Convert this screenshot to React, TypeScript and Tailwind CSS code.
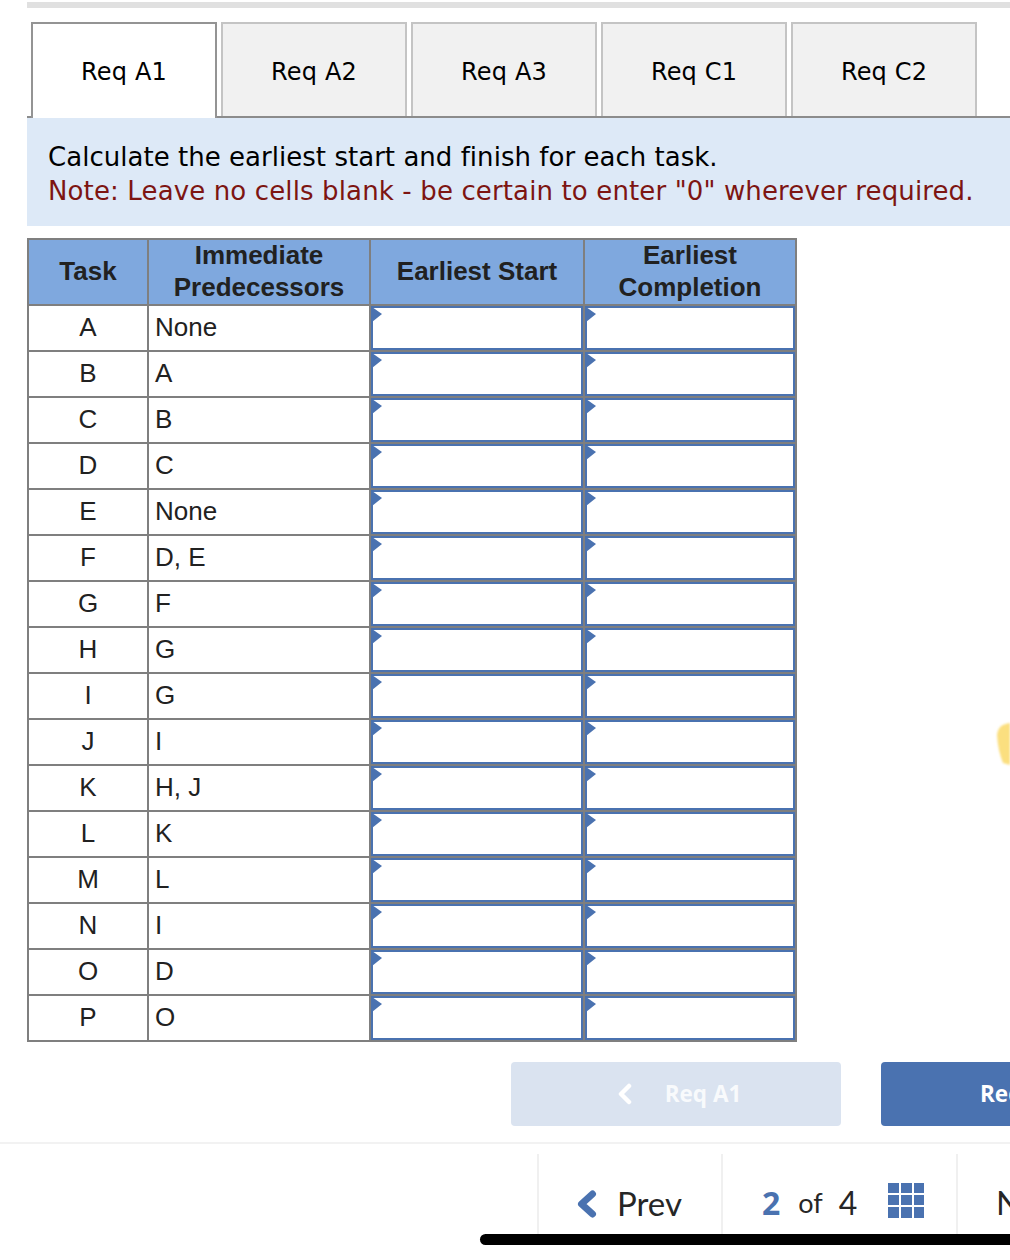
const tabs = ["Req A1", "Req A2", "Req A3", "Req C1", "Req C2"];
const rows = [
  ["A", "None"], ["B", "A"], ["C", "B"], ["D", "C"], ["E", "None"], ["F", "D, E"], ["G", "F"], ["H", "G"],
  ["I", "G"], ["J", "I"], ["K", "H, J"], ["L", "K"], ["M", "L"], ["N", "I"], ["O", "D"], ["P", "O"],
];

function EntryCell() {
  return (
    <td className="relative border-2 border-[#7f7f7f] p-0 align-top">
      <input aria-label="entry" className="block h-[44px] w-full border-2 border-[#4a72b0] bg-white outline-none" />
      <svg className="absolute left-0 top-0 h-[16px] w-[11px]" viewBox="0 0 11 16">
        <polygon points="1,1 11,8 1,16" fill="#4a72b0" />
      </svg>
    </td>
  );
}

function HeaderCell({ lines }: { lines: string[] }) {
  return (
    <th className="border-2 border-[#7f7f7f] font-bold">
      <div className="-translate-y-px">
        {lines.map((l) => (
          <div key={l}>{l}</div>
        ))}
      </div>
    </th>
  );
}

export default function App() {
  return (
    <div className="relative h-[1260px] w-[1010px] overflow-hidden bg-white pl-[27px] pt-[2px]">
      <div className="h-[6px] bg-[#e0e0e0]" />

      <div className="mt-[14px] flex h-[96px] gap-[4px] border-b-2 border-[#8c8c8c] pl-[4px] font-['DejaVu_Sans',sans-serif] text-[24px] tracking-[0.15px] text-black">
        {tabs.map((t, i) => (
          <div
            key={t}
            className={
              i === 0
                ? "z-10 flex h-[96px] w-[186px] items-center justify-center border-2 border-b-0 border-[#949494] bg-white pt-[1px]"
                : "flex h-[94px] w-[186px] items-center justify-center border-2 border-b-0 border-[#c4c4c4] bg-[#f1f1f1] pt-[3px]"
            }
          >
            {t}
          </div>
        ))}
      </div>

      <div className="h-[108px] bg-[#dde9f7] pl-[21px] pt-[22px] font-['DejaVu_Sans',sans-serif] text-[26px] leading-[34px] text-black">
        <div className="tracking-[0.03px]">Calculate the earliest start and finish for each task.</div>
        <div className="whitespace-nowrap tracking-[0.13px] text-[#7d1512]">Note: Leave no cells blank - be certain to enter "0" wherever required.</div>
      </div>

      <table className="mt-[12px] w-[770px] table-fixed font-['Liberation_Sans',sans-serif] text-[26px] text-[#212121]">
        <colgroup>
          <col className="w-[120px]" />
          <col className="w-[222px]" />
          <col className="w-[214px]" />
          <col className="w-[212px]" />
        </colgroup>
        <thead>
          <tr className="h-[66px] bg-[#7fa8de] leading-[32px]">
            <HeaderCell lines={["Task"]} />
            <HeaderCell lines={["Immediate", "Predecessors"]} />
            <HeaderCell lines={["Earliest Start"]} />
            <HeaderCell lines={["Earliest", "Completion"]} />
          </tr>
        </thead>
        <tbody>
          {rows.map(([task, pred]) => (
            <tr key={task} className="h-[46px]">
              <td className="border-2 border-[#7f7f7f] pb-[2px] text-center">{task}</td>
              <td className="border-2 border-[#7f7f7f] pb-[2px] pl-[6px]">{pred}</td>
              <EntryCell />
              <EntryCell />
            </tr>
          ))}
        </tbody>
      </table>

      <div className="mt-[20px] flex h-[64px] gap-[40px] pl-[484px] font-['Open_Sans',sans-serif] text-[22.5px] font-bold text-white">
        <div className="flex h-[64px] w-[330px] shrink-0 items-center justify-center rounded-[4px] bg-[#dae3f0] pl-[6px] text-[#f8fafc]">
          <svg className="mr-[33px] h-[22px] w-[15px]" viewBox="0 0 15 22" fill="none">
            <path d="M12 3 L4 11 L12 19" stroke="white" strokeWidth="4.5" strokeLinecap="round" strokeLinejoin="round" />
          </svg>
          <span>Req A1</span>
        </div>
        <div className="flex h-[64px] w-[330px] shrink-0 items-center rounded-[4px] bg-[#4a72b0] pl-[99px]">Req A3</div>
      </div>

      <div className="-ml-[27px] mt-[16px] h-[2px] bg-[#f2f2f2]" />

      <div className="-ml-[27px] mt-[10px] flex h-[80px] pl-[537px] font-['Lato',sans-serif] text-[#262626]">
        <div className="flex w-[184px] shrink-0 items-center border-l-2 border-[#f0f0f0] pl-[38px] pt-[20px] text-[33px]">
          <svg className="mr-[20px] h-[30px] w-[20px]" viewBox="0 0 20 30" fill="none">
            <path d="M15.5 5 L4.5 15 L15.5 25" stroke="#4a72b0" strokeWidth="7" strokeLinecap="round" strokeLinejoin="round" />
          </svg>
          <span>Prev</span>
        </div>
        <div className="flex w-[235px] shrink-0 items-center border-l-2 border-[#f0f0f0] pl-[39px] pt-[18px]">
          <span className="font-['Open_Sans',sans-serif] text-[32px] font-bold text-[#4a72b0]">2</span>
          <span className="ml-[18px] text-[27px]">of</span>
          <span className="ml-[16px] text-[32px]">4</span>
          <div className="mb-[6px] ml-[31px] grid h-[35px] w-[36px] grid-cols-3 gap-[2px]">
            {Array.from({ length: 9 }).map((_, i) => (
              <div key={i} className="bg-[#4a72b0]" />
            ))}
          </div>
        </div>
        <div className="flex w-[200px] shrink-0 items-center border-l-2 border-[#f0f0f0] pl-[38px] pt-[18px] text-[33px]">Next</div>
      </div>

      <div className="absolute left-[480px] top-[1234px] h-[11px] w-[600px] rounded-full bg-black" />
      <svg className="absolute left-[990px] top-[715px] h-[60px] w-[20px] blur-[1px]" viewBox="0 0 20 60">
        <path d="M20 8 Q8 9 7 20 Q8 36 13 48 L20 50 Z" fill="#fbdf7f" />
      </svg>
    </div>
  );
}
